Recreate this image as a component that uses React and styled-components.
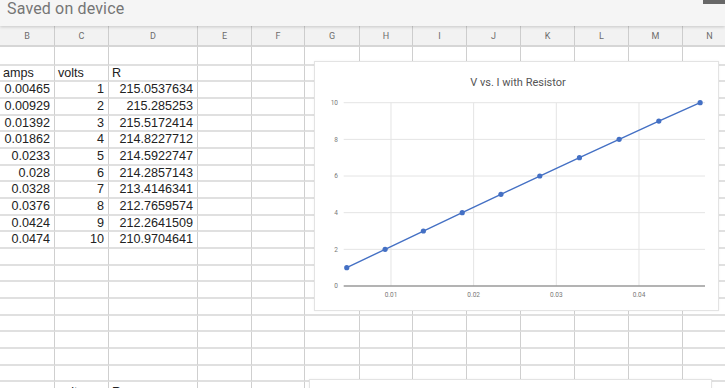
import React from "react";
import styled, { createGlobalStyle } from "styled-components";

const GlobalStyle = createGlobalStyle`
  html, body {
    margin: 0;
    padding: 0;
    background: #fff;
    overflow: hidden;
  }
`;

const COLS = ["B", "C", "D", "E", "F", "G", "H", "I", "J", "K", "L", "M", "N"];
const COL_TEMPLATE = "55px 54px 89px 54px 53px 55px 53px 54px 54px 54px 54px 54px 54px";

const data = [
  ["0.00465", "1", "215.0537634"],
  ["0.00929", "2", "215.285253"],
  ["0.01392", "3", "215.5172414"],
  ["0.01862", "4", "214.8227712"],
  ["0.0233", "5", "214.5922747"],
  ["0.028", "6", "214.2857143"],
  ["0.0328", "7", "213.4146341"],
  ["0.0376", "8", "212.7659574"],
  ["0.0424", "9", "212.2641509"],
  ["0.0474", "10", "210.9704641"],
];

const Page = styled.div`
  position: relative;
  width: 725px;
  height: 388px;
  overflow: hidden;
  font-family: "Liberation Sans", Arial, sans-serif;
`;

const TopBar = styled.div`
  position: relative;
  z-index: 2;
  height: 26px;
  box-sizing: border-box;
  background: #f5f5f5;
  box-shadow: 0 1px 3px rgba(0, 0, 0, 0.18);
  padding: 0 0 0 7px;
  font-family: Roboto, "Liberation Sans", sans-serif;
  font-size: 16px;
  line-height: 18px;
  color: #757575;
  letter-spacing: 0.15px;
`;

const Corner = styled.div`
  position: absolute;
  top: -5px;
  right: 0;
  width: 22px;
  height: 9px;
  border-radius: 4px 0 0 0;
  background: #686868;
`;

const Sheet = styled.div`
  display: flex;
  flex-direction: column;
`;

const Row = styled.div`
  display: grid;
  grid-template-columns: ${COL_TEMPLATE};
  height: ${(p) => p.$h}px;
  flex: none;
`;

const HeadCell = styled.div`
  background: #f2f2f2;
  border-right: 1px solid #cdcdcd;
  border-bottom: 2px solid #d6d6d6;
  display: flex;
  align-items: center;
  justify-content: center;
  font-family: Roboto, "Liberation Sans", sans-serif;
  font-size: 9px;
  color: #6d6d6d;
`;

const Cell = styled.div`
  border-right: 1px solid #cfcfcf;
  border-bottom: 2px solid #e0e0e0;
  padding: ${(p) => p.$top || 0}px ${(p) => (p.$right ? 4 : 3)}px 0 3px;
  text-align: ${(p) => (p.$right ? "right" : "left")};
  font-size: 12.6px;
  line-height: 15px;
  color: #222;
  white-space: nowrap;
  overflow: hidden;
`;

const ChartCard = styled.div`
  position: absolute;
  left: ${(p) => p.$x}px;
  top: ${(p) => p.$y}px;
  width: ${(p) => p.$w}px;
  height: ${(p) => p.$h}px;
  background: #fff;
  border: 1px solid #e3e3e3;
  box-shadow: 0 0 2px rgba(0, 0, 0, 0.06);
  box-sizing: border-box;
`;

const Plot = styled.svg`
  display: block;
  font-family: Roboto, "Liberation Sans", sans-serif;
`;

const X0 = 28.7;
const X1 = 390;
const Y0 = 224;
const YTOP = 40.7;
const px = (a) => -6.7 + a * 8267;
const py = (v) => Y0 - v * 18.33;

const Chart = () => {
  const pts = data.map(([a, v]) => [px(parseFloat(a)), py(parseFloat(v))]);
  return (
    <Plot width="405" height="250">
      <text x="203" y="24" textAnchor="middle" fontSize="11" fill="#555">
        V vs. I with Resistor
      </text>
      {[2, 4, 6, 8, 10].map((v) => (
        <line key={v} x1={X0} x2={X1} y1={py(v)} y2={py(v)} stroke="#e4e4e4" strokeWidth="1" />
      ))}
      {[0.01, 0.02, 0.03, 0.04].map((a) => (
        <line key={a} x1={px(a)} x2={px(a)} y1={YTOP} y2={Y0} stroke="#e4e4e4" strokeWidth="1" />
      ))}
      <line x1={X0} x2={X1} y1={Y0} y2={Y0} stroke="#9a9a9a" strokeWidth="1.3" />
      {[0, 2, 4, 6, 8, 10].map((v) => (
        <text key={v} x="23" y={py(v) + 2.3} textAnchor="end" fontSize="6.5" fill="#777">
          {v}
        </text>
      ))}
      {[0.01, 0.02, 0.03, 0.04].map((a) => (
        <text key={a} x={px(a)} y="235" textAnchor="middle" fontSize="6.5" fill="#777">
          {a.toFixed(2)}
        </text>
      ))}
      <polyline
        points={pts.map((p) => p.join(",")).join(" ")}
        fill="none"
        stroke="#4470c4"
        strokeWidth="1.4"
      />
      {pts.map(([x, y], i) => (
        <circle key={i} cx={x} cy={y} r="2.6" fill="#4470c4" />
      ))}
    </Plot>
  );
};

const emptyCells = (n) =>
  Array.from({ length: n }, (_, i) => <Cell key={`e${i}`} />);

export default function App() {
  return (
    <>
      <GlobalStyle />
      <Page>
        <TopBar>
          Saved on device
          <Corner />
        </TopBar>
        <Sheet>
          <Row $h={21}>
            {COLS.map((c) => (
              <HeadCell key={c}>{c}</HeadCell>
            ))}
          </Row>
          <Row $h={18.7}>{emptyCells(13)}</Row>
          <Row $h={16.67}>
            <Cell>amps</Cell>
            <Cell>volts</Cell>
            <Cell>R</Cell>
            {emptyCells(10)}
          </Row>
          {data.map((r, i) => (
            <Row key={i} $h={16.67}>
              {r.map((v, j) => (
                <Cell key={j} $right>
                  {v}
                </Cell>
              ))}
              {emptyCells(10)}
            </Row>
          ))}
          {Array.from({ length: 8 }, (_, i) => (
            <Row key={`b${i}`} $h={16.67}>
              {emptyCells(13)}
            </Row>
          ))}
          <Row $h={16.67}>
            <Cell $top={3}>amps</Cell>
            <Cell $top={3}>volts</Cell>
            <Cell $top={3}>R</Cell>
            {emptyCells(10)}
          </Row>
        </Sheet>
        <ChartCard $x={314} $y={61} $w={405} $h={250}>
          <Chart />
        </ChartCard>
        <ChartCard $x={309} $y={379} $w={403} $h={40} />
      </Page>
    </>
  );
}
